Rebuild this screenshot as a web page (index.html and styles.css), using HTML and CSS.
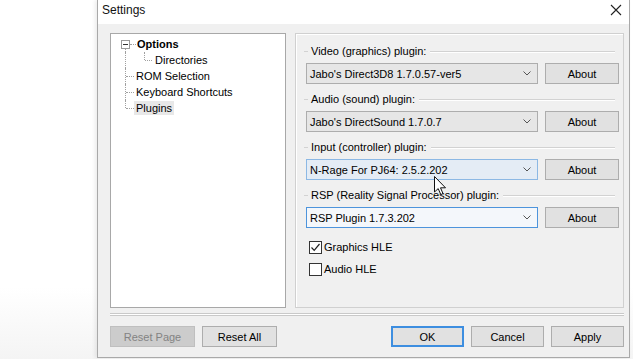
FILE: index.html
```html
<!DOCTYPE html>
<html>
<head>
<meta charset="utf-8">
<link rel="stylesheet" href="styles.css">
</head>
<body>
<div class="screen">
  <div class="dialog">
    <div class="titlebar">
      <span class="title">Settings</span>
      <svg class="close" width="12" height="12" viewBox="0 0 12 12"><path d="M1 1 L11 11 M11 1 L1 11" stroke="#222" stroke-width="1.1" fill="none"/></svg>
    </div>
    <div class="body">
      <div class="panes">
        <div class="tree">
          <div class="row">
            <span class="expander"><span class="minus"></span></span>
            <span class="dash"></span>
            <span class="label bold">Options</span>
          </div>
          <div class="row">
            <span class="cell pipe w19"></span>
            <span class="cell elbow w22"></span>
            <span class="label sub">Directories</span>
          </div>
          <div class="row">
            <span class="cell tee w23"></span>
            <span class="label">ROM Selection</span>
          </div>
          <div class="row">
            <span class="cell tee w23"></span>
            <span class="label">Keyboard Shortcuts</span>
          </div>
          <div class="row">
            <span class="cell elbow w23"></span>
            <span class="label selected">Plugins</span>
          </div>
        </div>
        <div class="page">
          <div class="group">
            <div class="glabel"><span class="gdash"></span><span class="gtext">Video (graphics) plugin:</span><span class="gline"></span></div>
            <div class="prow">
              <div class="combo"><span class="ctext">Jabo's Direct3D8 1.7.0.57-ver5</span><svg class="chev" width="8" height="5" viewBox="0 0 8 5"><path d="M0.5 0.5 L4 4 L7.5 0.5" stroke="#555" fill="none"/></svg></div>
              <div class="btn about">About</div>
            </div>
          </div>
          <div class="group">
            <div class="glabel"><span class="gdash"></span><span class="gtext">Audio (sound) plugin:</span><span class="gline"></span></div>
            <div class="prow">
              <div class="combo"><span class="ctext">Jabo's DirectSound 1.7.0.7</span><svg class="chev" width="8" height="5" viewBox="0 0 8 5"><path d="M0.5 0.5 L4 4 L7.5 0.5" stroke="#555" fill="none"/></svg></div>
              <div class="btn about">About</div>
            </div>
          </div>
          <div class="group">
            <div class="glabel"><span class="gdash"></span><span class="gtext">Input (controller) plugin:</span><span class="gline"></span></div>
            <div class="prow">
              <div class="combo hover"><span class="ctext">N-Rage For PJ64: 2.5.2.202</span><svg class="chev" width="8" height="5" viewBox="0 0 8 5"><path d="M0.5 0.5 L4 4 L7.5 0.5" stroke="#555" fill="none"/></svg></div>
              <div class="btn about">About</div>
            </div>
          </div>
          <div class="group">
            <div class="glabel"><span class="gdash"></span><span class="gtext">RSP (Reality Signal Processor) plugin:</span><span class="gline"></span></div>
            <div class="prow">
              <div class="combo focus"><span class="ctext">RSP Plugin 1.7.3.202</span><svg class="chev" width="8" height="5" viewBox="0 0 8 5"><path d="M0.5 0.5 L4 4 L7.5 0.5" stroke="#555" fill="none"/></svg></div>
              <div class="btn about">About</div>
            </div>
          </div>
          <div class="checks">
            <div class="check"><span class="box"><svg width="11" height="11" viewBox="0 0 11 11"><path d="M1.5 5.5 L4.2 8.3 L9.5 2" stroke="#222" stroke-width="1.2" fill="none"/></svg></span><span class="clabel">Graphics HLE</span></div>
            <div class="check"><span class="box"></span><span class="clabel">Audio HLE</span></div>
          </div>
        </div>
      </div>
      <div class="sep"></div>
      <div class="buttons">
        <div class="bgroup">
          <div class="btn disabled wide">Reset Page</div>
          <div class="btn w75">Reset All</div>
        </div>
        <div class="bgroup">
          <div class="btn default">OK</div>
          <div class="btn">Cancel</div>
          <div class="btn">Apply</div>
        </div>
      </div>
    </div>
  </div>
  <svg class="cursor" width="13" height="20" viewBox="0 0 13 20"><path d="M0.5 0.5 L0.5 16 L4.2 12.6 L6.8 18.6 L9 17.6 L6.5 11.8 L11.5 11.8 Z" fill="#fff" stroke="#111" stroke-width="1"/></svg>
</div>
</body>
</html>
```

FILE: styles.css
```css
html, body {
  margin: 0;
  padding: 0;
}
body {
  width: 633px;
  height: 359px;
  overflow: hidden;
  background: #ffffff;
  font-family: "Liberation Sans", Arial, sans-serif;
  font-size: 11px;
  color: #000;
}
.screen {
  position: relative;
  width: 633px;
  height: 359px;
  background: linear-gradient(#ffffff 80%, #f4f4f4);
}
.dialog {
  margin-left: 97px;
  width: 533px;
  height: 358px;
  box-sizing: border-box;
  border: 1px solid #a9a9a9;
  border-top: none;
  background: #f0f0f0;
  box-shadow: -2px 0 4px rgba(0,0,0,0.08);
}
.titlebar {
  height: 24px;
  background: #ffffff;
  display: flex;
  align-items: center;
  justify-content: space-between;
  padding: 0 4px 4px 4px;
  box-sizing: border-box;
}
.title {
  font-size: 12px;
  color: #111;
}
.close {
  margin-right: 3px;
}
.body {
  padding: 9px 5px 0 12px;
}
.panes {
  display: flex;
  gap: 9px;
  height: 275px;
}
.tree {
  width: 176px;
  box-sizing: border-box;
  border: 1px solid #a8a8a8;
  background: #fff;
  padding: 2px 0 0 10px;
}
.row {
  display: flex;
  align-items: center;
  height: 16px;
}
.expander {
  position: relative;
  width: 9px;
  height: 9px;
  box-sizing: border-box;
  border: 1px solid #9a9a9a;
  background: #fff;
}
.expander::after {
  content: "";
  position: absolute;
  left: 3px;
  top: 8px;
  height: 5px;
  border-left: 1px dotted #a0a0a0;
}
.minus {
  position: absolute;
  left: 1px;
  top: 3px;
  width: 5px;
  border-top: 1px solid #333;
}
.dash {
  width: 6px;
  border-top: 1px dotted #a0a0a0;
}
.label {
  margin-left: 2px;
  white-space: nowrap;
}
.bold {
  font-weight: bold;
  margin-left: 1px;
}
.sub {
  margin-left: 3px;
}
.selected {
  background: #e8e8e8;
  padding: 1px 2px;
  margin-left: 0;
}
.cell {
  position: relative;
  height: 16px;
  align-self: stretch;
}
.w19 { width: 9px; margin-left: -10px; padding-left: 10px; }
.w22 { width: 22px; }
.w23 { width: 13px; margin-left: -10px; padding-left: 10px; }
.pipe::before,
.tee::before {
  content: "";
  position: absolute;
  left: 14px;
  top: 0;
  height: 16px;
  border-left: 1px dotted #a0a0a0;
}
.elbow::before {
  content: "";
  position: absolute;
  left: 14px;
  top: 0;
  height: 8px;
  border-left: 1px dotted #a0a0a0;
}
.tee::after,
.elbow::after {
  content: "";
  position: absolute;
  left: 15px;
  right: 0;
  top: 8px;
  border-top: 1px dotted #a0a0a0;
}
.page {
  width: 329px;
  box-sizing: border-box;
  border: 1px solid #d0d0d0;
  box-shadow: inset 1px 1px 0 #fff;
  padding: 10px 0 0 0;
}
.group {
  margin-bottom: 8px;
}
.glabel {
  display: flex;
  align-items: center;
  height: 14px;
  margin-bottom: 5px;
  margin-left: 8px;
  margin-right: 8px;
}
.gdash {
  width: 4px;
  border-top: 1px solid #d2d2d2;
}
.gtext {
  padding: 0 4px 0 3px;
  white-space: nowrap;
}
.gline {
  flex: 1;
  border-top: 1px solid #d2d2d2;
  box-shadow: 0 1px 0 #fff;
}
.prow {
  display: flex;
  gap: 7px;
  margin-left: 10px;
}
.combo {
  width: 232px;
  height: 21px;
  box-sizing: border-box;
  border: 1px solid #adadad;
  background: #e6e6e6;
  display: flex;
  align-items: center;
  justify-content: space-between;
  padding: 0 5px 0 3px;
}
.combo.hover {
  border-color: #8cb8e4;
  background: #e4ecf5;
}
.combo.focus {
  border-color: #4d94dc;
  background: #f4f7fb;
}
.chev {
  margin-right: 1px;
}
.btn {
  width: 73px;
  height: 21px;
  box-sizing: border-box;
  border: 1px solid #adadad;
  background: #e1e1e1;
  display: flex;
  align-items: center;
  justify-content: center;
}
.about {
  width: 74px;
}
.checks {
  margin-top: 5px;
  margin-left: 13px;
}
.check {
  display: flex;
  align-items: center;
  height: 22px;
}
.box {
  width: 13px;
  height: 13px;
  box-sizing: border-box;
  border: 1px solid #333;
  background: #fff;
  display: flex;
  align-items: center;
  justify-content: center;
}
.clabel {
  margin-left: 2px;
}
.sep {
  margin-top: 5px;
  height: 1px;
  border-top: 1px solid #c9c9c9;
  border-bottom: 1px solid #c9c9c9;
  background: #fff;
}
.buttons {
  display: flex;
  justify-content: space-between;
  margin-top: 10px;
}
.bgroup {
  display: flex;
  gap: 7px;
}
.wide {
  width: 85px;
}
.w75 {
  width: 75px;
}
.disabled {
  background: #cccccc;
  border-color: #bfbfbf;
  color: #838383;
}
.default {
  border: 2px solid #3d8ee0;
}
.cursor {
  position: absolute;
  left: 434px;
  top: 176px;
}
```
